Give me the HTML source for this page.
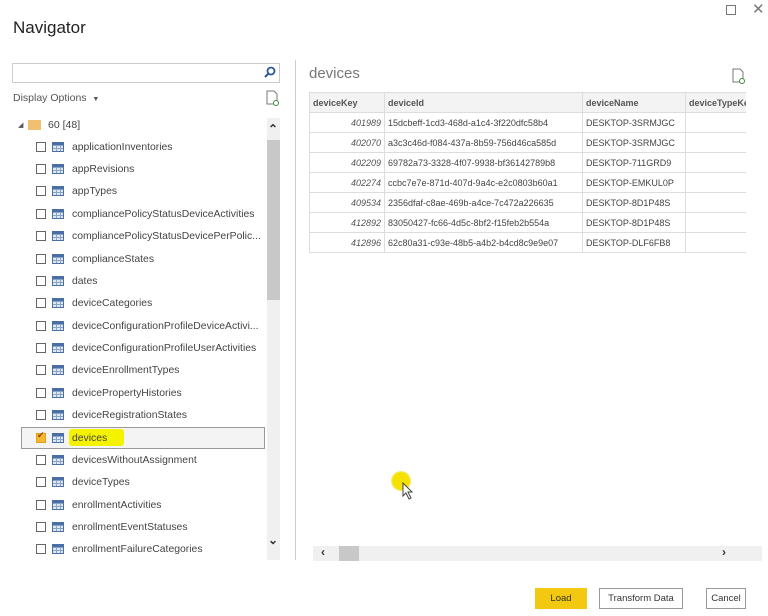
<!DOCTYPE html>
<html><head><meta charset="utf-8"><style>
*{margin:0;padding:0;box-sizing:border-box}
body{width:768px;height:616px;background:#fff;font-family:"Liberation Sans",sans-serif;color:#333;position:relative;overflow:hidden}
.a{position:absolute}
.item{position:absolute;left:36px;height:20px;font-size:10.4px;color:#444;white-space:nowrap;display:flex;align-items:center}
.cb{width:10px;height:10px;border:1.5px solid #666;background:#fff;margin-right:6px}
.ti{width:12px;height:10px;border:1px solid #4a6fa5;background:linear-gradient(#4a6fa5 0 2px,transparent 2px),repeating-linear-gradient(90deg,transparent 0 3px,#8aa4c8 3px 4px),repeating-linear-gradient(0deg,#dfe7f2 0 2px,#8aa4c8 2px 3px);margin-right:8px}
table{border-collapse:collapse;font-size:9px}
td,th{border:1px solid #ddd;height:20px;padding:0 3px;white-space:nowrap;overflow:hidden;text-align:left;color:#444}
th{background:#f3f3f3;font-weight:bold;height:20px;color:#555}
td.k{text-align:right;font-style:italic;color:#555}
.btn{position:absolute;top:588px;height:21px;border:1px solid #999;font-size:9.5px;display:flex;align-items:center;justify-content:center;color:#333;background:#fff}
</style></head><body>
<div class="a" style="left:13px;top:18px;font-size:17px;color:#222">Navigator</div>
<div class="a" style="left:726px;top:5px;width:10px;height:10px;border:1px solid #777"></div>
<div class="a" style="left:752px;top:0px;font-size:15px;color:#777">✕</div>

<div class="a" style="left:12px;top:63px;width:268px;height:20px;border:1px solid #ccc"></div>
<svg class="a" style="left:263px;top:65px" width="14" height="14"><circle cx="8" cy="6" r="3.5" fill="none" stroke="#2b5797" stroke-width="1.8"/><line x1="5.5" y1="8.5" x2="2" y2="12" stroke="#2b5797" stroke-width="2"/></svg>
<div class="a" style="left:13px;top:92px;font-size:10.5px;color:#555">Display Options &nbsp;<span style="font-size:7px">▼</span></div>
<svg class="a" style="left:265px;top:90px" width="14" height="16"><path d="M2 1h7l3 3v10H2z" fill="#fff" stroke="#777"/><circle cx="11" cy="13" r="2.5" fill="#fff" stroke="#3a8a3a"/></svg>

<div class="a" style="left:18px;top:121px;font-size:7px;color:#555">◢</div>
<div class="a" style="left:28px;top:120px;width:13px;height:10px;background:#f0c070"></div>
<div class="a" style="left:48px;top:119px;font-size:10.5px;color:#444">60 [48]</div>

<div class="a" style="left:267px;top:118px;width:13px;height:442px;background:#f0f0f0"></div>
<div class="a" style="left:267px;top:140px;width:13px;height:160px;background:#c8c8c8"></div>
<div class="a" style="left:268px;top:122px;font-size:12px;color:#333;font-weight:bold">⌃</div>
<div class="a" style="left:268px;top:533px;font-size:12px;color:#333;font-weight:bold">⌄</div>

<div class="a" style="left:21px;top:427px;width:244px;height:22px;border:1px solid #999;background:#f4f4f4"></div>
<div class="a" style="left:69px;top:429px;width:55px;height:17px;background:#f5f200;border-radius:3px"></div>

<div class="item" style="top:137px"><div class="cb"></div><div class="ti"></div>applicationInventories</div>
<div class="item" style="top:159px"><div class="cb"></div><div class="ti"></div>appRevisions</div>
<div class="item" style="top:181px"><div class="cb"></div><div class="ti"></div>appTypes</div>
<div class="item" style="top:204px"><div class="cb"></div><div class="ti"></div>compliancePolicyStatusDeviceActivities</div>
<div class="item" style="top:226px"><div class="cb"></div><div class="ti"></div>compliancePolicyStatusDevicePerPolic...</div>
<div class="item" style="top:249px"><div class="cb"></div><div class="ti"></div>complianceStates</div>
<div class="item" style="top:271px"><div class="cb"></div><div class="ti"></div>dates</div>
<div class="item" style="top:293px"><div class="cb"></div><div class="ti"></div>deviceCategories</div>
<div class="item" style="top:316px"><div class="cb"></div><div class="ti"></div>deviceConfigurationProfileDeviceActivi...</div>
<div class="item" style="top:338px"><div class="cb"></div><div class="ti"></div>deviceConfigurationProfileUserActivities</div>
<div class="item" style="top:360px"><div class="cb"></div><div class="ti"></div>deviceEnrollmentTypes</div>
<div class="item" style="top:383px"><div class="cb"></div><div class="ti"></div>devicePropertyHistories</div>
<div class="item" style="top:405px"><div class="cb"></div><div class="ti"></div>deviceRegistrationStates</div>
<div class="item" style="top:428px"><div class="cb" style="border-color:#e0a020;background:#f5b830;position:relative"><span style="position:absolute;left:0;top:-4px;font-size:9px;color:#a04000">✔</span></div><div class="ti"></div>devices</div>
<div class="item" style="top:450px"><div class="cb"></div><div class="ti"></div>devicesWithoutAssignment</div>
<div class="item" style="top:472px"><div class="cb"></div><div class="ti"></div>deviceTypes</div>
<div class="item" style="top:495px"><div class="cb"></div><div class="ti"></div>enrollmentActivities</div>
<div class="item" style="top:517px"><div class="cb"></div><div class="ti"></div>enrollmentEventStatuses</div>
<div class="item" style="top:539px"><div class="cb"></div><div class="ti"></div>enrollmentFailureCategories</div>

<div class="a" style="left:295px;top:60px;width:1px;height:500px;background:#ccc"></div>

<div class="a" style="left:309px;top:65px;font-size:15px;color:#777">devices</div>
<svg class="a" style="left:731px;top:68px" width="14" height="16"><path d="M2 1h7l3 3v10H2z" fill="#fff" stroke="#777"/><circle cx="11" cy="13" r="2.5" fill="#fff" stroke="#3a8a3a"/></svg>

<div class="a" style="left:309px;top:92px;width:437px;overflow:hidden">
<table style="width:460px;table-layout:fixed">
<colgroup><col style="width:75px"><col style="width:198px"><col style="width:103px"><col style="width:84px"></colgroup>
<tr><th>deviceKey</th><th>deviceId</th><th>deviceName</th><th>deviceTypeKey</th></tr>
<tr><td class="k">401989</td><td>15dcbeff-1cd3-468d-a1c4-3f220dfc58b4</td><td>DESKTOP-3SRMJGC</td><td></td></tr>
<tr><td class="k">402070</td><td>a3c3c46d-f084-437a-8b59-756d46ca585d</td><td>DESKTOP-3SRMJGC</td><td></td></tr>
<tr><td class="k">402209</td><td>69782a73-3328-4f07-9938-bf36142789b8</td><td>DESKTOP-711GRD9</td><td></td></tr>
<tr><td class="k">402274</td><td>ccbc7e7e-871d-407d-9a4c-e2c0803b60a1</td><td>DESKTOP-EMKUL0P</td><td></td></tr>
<tr><td class="k">409534</td><td>2356dfaf-c8ae-469b-a4ce-7c472a226635</td><td>DESKTOP-8D1P48S</td><td></td></tr>
<tr><td class="k">412892</td><td>83050427-fc66-4d5c-8bf2-f15feb2b554a</td><td>DESKTOP-8D1P48S</td><td></td></tr>
<tr><td class="k">412896</td><td>62c80a31-c93e-48b5-a4b2-b4cd8c9e9e07</td><td>DESKTOP-DLF6FB8</td><td></td></tr>
</table></div>

<div class="a" style="left:391px;top:471px;width:20px;height:20px;border-radius:50%;background:radial-gradient(circle,#f5e000 55%,rgba(245,230,0,0.3) 80%,transparent 100%)"></div>
<svg class="a" style="left:402px;top:482px" width="12" height="18"><path d="M1 1v13l3-3 3 6 2-1-3-6h4z" fill="#fff" stroke="#444"/></svg>

<div class="a" style="left:313px;top:546px;width:449px;height:15px;background:#f0f0f0"></div>
<div class="a" style="left:339px;top:546px;width:20px;height:15px;background:#c8c8c8"></div>
<div class="a" style="left:321px;top:545px;font-size:12px;font-weight:bold;color:#333">‹</div>
<div class="a" style="left:722px;top:545px;font-size:12px;font-weight:bold;color:#333">›</div>

<div class="btn" style="left:535px;width:52px;background:#f2c811;border-color:#f2c811">Load</div>
<div class="btn" style="left:599px;width:84px">Transform Data</div>
<div class="btn" style="left:706px;width:40px">Cancel</div>
</body></html>
